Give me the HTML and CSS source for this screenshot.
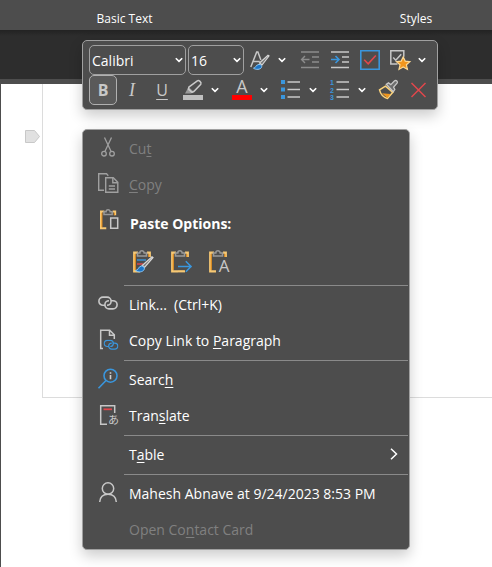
FILE: index.html
```html
<!DOCTYPE html>
<html lang="en">
<head>
<meta charset="utf-8">
<meta name="viewport" content="width=device-width, initial-scale=1">
<title>Notes</title>
<link rel="stylesheet" href="styles.css">
</head>
<body>
<svg class="defs" aria-hidden="true">
  <symbol id="chevron" viewBox="0 0 8 6"><path d="M.8 1.2 4 4.400 7.200 1.200" fill="none" stroke="#fff" stroke-width="1.6"/></symbol>
  <symbol id="clipboard" viewBox="0 0 22 24">
    <path d="M6 3.7H2.2v18.6H8M15 3.7h2.8V8" fill="none" stroke="#f7c873" stroke-width="2.2"/>
    <path d="M3.2 5v16M16.800 5v3" fill="none" stroke="#e8901c" stroke-width="1.2"/>
    <path d="M5.500 7V4h2.300a2.200 2.200 0 0 1 4.400 0h2.300v3z" fill="#4d4d4d" stroke="#999" stroke-width="1.6"/>
  </symbol>
  <symbol id="links" viewBox="0 0 20 14">
    <path d="M6.300 9.300H5a4.100 4.100 0 1 1 0-8.200h4a4.100 4.100 0 0 1 0 8.200M13.700 4.700H15a4.100 4.100 0 1 1 0 8.200h-4a4.100 4.100 0 0 1 0-8.200" fill="none" stroke="currentColor" stroke-width="1.6"/>
  </symbol>
</svg>

<header class="ribbon">
  <div class="group basic">Basic Text</div>
  <div class="divider"></div>
  <div class="group styles">Styles</div>
</header>
<div class="backdrop"></div>
<main class="canvas">
  <svg class="marker" viewBox="0 0 15 13" aria-hidden="true"><path d="M.5.5h9l5 6-5 6h-9z" fill="#e1e1e1" stroke="#c8c8c8"/></svg>
  <div class="page"></div>
</main>

<div class="toolbar" role="toolbar" aria-label="Formatting">
  <div class="row">
    <div class="combo font">
      <select aria-label="Font"><option>Calibri</option></select>
      <svg class="chev"><use href="#chevron"/></svg>
    </div>
    <div class="combo size">
      <select aria-label="Font size"><option>16</option></select>
      <svg class="chev"><use href="#chevron"/></svg>
    </div>
    <div class="split quick">
      <button class="tool" aria-label="Quick styles"><svg class="icon" viewBox="0 0 20 20">
        <path d="M.8 17 6.700 2h1.200l3 8M3 11.500h6.800" fill="none" stroke="#c8c8c8" stroke-width="1.500"/>
        <path d="m19 6-7 9-2.500-2L18 5.300z" fill="#777" stroke="#d8d8d8" stroke-width="1.200"/>
        <path d="M3.500 18.200c2 .2 2.500-3.800 5.500-3.800 2 0 3.300 1.600 2.500 3-1.200 2.300-5.500 2.600-8 .8z" fill="#1c75c8" stroke="#8fc9f5" stroke-width="1"/>
      </svg></button>
      <button class="drop" aria-label="More styles"><svg class="chev"><use href="#chevron"/></svg></button>
    </div>
    <button class="tool" aria-label="Decrease indent" disabled><svg class="icon" viewBox="0 0 20 20">
      <path d="M1 2h18M12 7h7M12 12h7M1 17.500h18" stroke="#8c8c8c" stroke-width="1.600"/>
      <path d="M9.500 9.500H2M5 6 1.600 9.500 5 13" fill="none" stroke="#8c8c8c" stroke-width="1.400"/>
    </svg></button>
    <button class="tool" aria-label="Increase indent"><svg class="icon" viewBox="0 0 20 20">
      <path d="M1 2h18M12 7h7M12 12h7M1 17.500h18" stroke="#c8c8c8" stroke-width="1.600"/>
      <path d="M1 9.500h7.500M5.500 6 9 9.500 5.500 13" fill="none" stroke="#3a96dd" stroke-width="1.600"/>
    </svg></button>
    <button class="tool" aria-label="To Do tag"><svg class="icon" viewBox="0 0 20 20">
      <path d="M.8.8h18.400v18.400H.8z" fill="none" stroke="#3a96dd" stroke-width="1.600"/>
      <path d="m4.200 9.800 4 4 7.600-8.300" fill="none" stroke="#e0474c" stroke-width="1.600"/>
    </svg></button>
    <div class="split">
      <button class="tool" aria-label="Tags"><svg class="icon" viewBox="0 0 20 20">
        <path d="M7.500 14H.8V.8h13v6" fill="none" stroke="#c8c8c8" stroke-width="1.500"/>
        <path d="m3.200 7.500 2.600 2.700 5.400-6" fill="none" stroke="#c8c8c8" stroke-width="1.500"/>
        <path d="m13.200 6.800 2 4.300 4.700.5-3.500 3.200 1 4.600-4.200-2.400-4.200 2.400 1-4.600-3.500-3.200 4.700-.5z" fill="#f0961e" stroke="#fbd894" stroke-width="1.200"/>
      </svg></button>
      <button class="drop" aria-label="More tags"><svg class="chev"><use href="#chevron"/></svg></button>
    </div>
  </div>
  <div class="row">
    <button class="bold" aria-pressed="true">B</button>
    <button class="tool italic">I</button>
    <button class="tool underline">U</button>
    <div class="split spaced">
      <button class="tool" aria-label="Highlight"><svg class="icon" viewBox="0 0 20 20">
        <path d="M0 15h20v5H0z" fill="#bfbfbf"/>
        <path d="M2 13.500 5.500 7l5 4.500-2.500 2z" fill="#999"/>
        <path d="m5.800 7.200 8.500-6.400c1.500-1 4.500 1.500 3.500 3.400l-7 7.300-1.800.8-3.500-3.200z" fill="none" stroke="#c8c8c8" stroke-width="1.500"/>
      </svg></button>
      <button class="drop" aria-label="Highlight colors"><svg class="chev"><use href="#chevron"/></svg></button>
    </div>
    <div class="split spaced">
      <button class="tool" aria-label="Font color"><svg class="icon" viewBox="0 0 20 20">
        <text class="letter" x="10" y="13" font-size="18" text-anchor="middle">A</text>
        <path d="M0 15h20v5H0z" fill="#f00"/>
      </svg></button>
      <button class="drop" aria-label="More font colors"><svg class="chev"><use href="#chevron"/></svg></button>
    </div>
    <div class="split spaced">
      <button class="tool" aria-label="Bullets"><svg class="icon" viewBox="0 0 20 20">
        <path d="M0 0h4v4H0zM0 7.500h4v4H0zM0 15h4v4H0z" fill="#3a96dd"/>
        <path d="M6.500 2H19M6.500 9.500H19M6.500 17H19" stroke="#c8c8c8" stroke-width="1.500"/>
      </svg></button>
      <button class="drop" aria-label="More bullets"><svg class="chev"><use href="#chevron"/></svg></button>
    </div>
    <div class="split spaced">
      <button class="tool" aria-label="Numbering"><svg class="icon" viewBox="0 0 20 20">
        <g class="digits" font-size="7"><text x="0" y="5">1</text><text x="0" y="12.500">2</text><text x="0" y="20">3</text></g>
        <path d="M6.500 2H19M6.500 9.500H19M6.500 17H19" stroke="#c8c8c8" stroke-width="1.500"/>
      </svg></button>
      <button class="drop" aria-label="More numbering"><svg class="chev"><use href="#chevron"/></svg></button>
    </div>
    <button class="tool" aria-label="Format painter"><svg class="icon" viewBox="0 0 20 20">
      <path d="m7.500 6.200-6 3.600c1 4.300 3.800 7.300 8 8.700l5.300-6.200z" fill="#4d4d4d" stroke="#fbd37c" stroke-width="1.500"/>
      <path d="m4 13.300 8.500.8-3.200 4z" fill="#f0961e"/>
      <path d="m8.300 4.300 2.200-1.400 2.300 1.700 3.800-3.800c1.700-1 3.500.8 2.500 2.300l-3.500 4 1.200 2.400-1.500 2.300z" fill="#6d6d6d" stroke="#c8c8c8" stroke-width="1.300"/>
    </svg></button>
    <button class="tool" aria-label="Delete"><svg class="icon" viewBox="0 0 20 20">
      <path d="m3.500 3 14 14M17.500 3l-14 14" stroke="#e0474c" stroke-width="1.500"/>
    </svg></button>
  </div>
</div>

<div class="menu" role="menu">
  <button class="item" role="menuitem" disabled>
    <svg class="glyph" viewBox="0 0 22 22"><g fill="none" stroke="#a0a0a0" stroke-width="1.300"><path d="M7.500.5 14 14.300M14.500.5 8 14.300"/><circle cx="7" cy="16.700" r="2.300"/><circle cx="15" cy="16.700" r="2.300"/></g></svg>
    <span>Cu<u>t</u></span>
  </button>
  <button class="item" role="menuitem" disabled>
    <svg class="glyph" viewBox="0 0 22 22"><g fill="none" stroke="#a0a0a0" stroke-width="1.400"><path d="M7 17.300H1.700V.7h7.800l1.800 2M8.700 4.700h7.600l4.500 4.500v10.100H8.700z"/><path d="M15.800 5v4.700h5M11.800 13H18M11.800 16H18"/></g></svg>
    <span><u>C</u>opy</span>
  </button>
  <div class="heading">
    <svg class="glyph" viewBox="0 0 22 22"><use href="#clipboard" x="2" y="0" width="20" height="22"/><path d="M12.700 10h7.600v10.500h-7.600z" fill="#4d4d4d" stroke="#4d4d4d" stroke-width="4"/><path d="M13.700 10h7v10.300h-7z" fill="#4d4d4d" stroke="#c8c8c8" stroke-width="1.500"/></svg>
    <span>Paste Options:</span>
  </div>
  <div class="paste">
    <button aria-label="Keep source formatting"><svg viewBox="0 0 22 24"><use href="#clipboard"/><path d="M5 11h9" stroke="#3a96dd" stroke-width="1.400"/><path d="M5 15h6" stroke="#e0474c" stroke-width="1.400"/><path d="m21 8.500-8.500 10-2.300-2L20 7.700z" fill="#777" stroke="#d8d8d8" stroke-width="1.200"/><path d="M3.500 21.500c3 0 3-4.500 6-4.500 2.200 0 3.500 1.800 2.700 3.400-1.300 2.800-6 3.400-8.700 1.100z" fill="#1c75c8" stroke="#8fc9f5"/></svg></button>
    <button aria-label="Merge formatting"><svg viewBox="0 0 22 24"><use href="#clipboard"/><path d="M8 22.300h7" stroke="#f7c873" stroke-width="2.200"/><path d="M7.500 17.500h13.500M15.800 12.300l5.200 5.200-5.200 5.200" fill="none" stroke="#4d4d4d" stroke-width="3"/><path d="M8 17.500h13M15.800 12.300l5.200 5.200-5.200 5.200" fill="none" stroke="#3a96dd" stroke-width="1.600"/></svg></button>
    <button aria-label="Keep text only"><svg viewBox="0 0 22 24"><use href="#clipboard"/><text class="letter" x="16" y="23" font-size="17" text-anchor="middle">A</text></svg></button>
  </div>
  <hr>
  <button class="item" role="menuitem">
    <svg class="glyph light" viewBox="0 0 22 22"><use href="#links" x="1" y="3" width="20" height="14"/></svg>
    <span>Link...&nbsp; (Ctrl+K)</span>
  </button>
  <button class="item" role="menuitem">
    <svg class="glyph blue" viewBox="0 0 22 22"><path d="M6 19.500H3.700V1.200h9L17.300 5.800V10M12.500 1.500v4.700h4.800" fill="none" stroke="#c8c8c8" stroke-width="1.500"/><use href="#links" x="6.500" y="10.500" width="15" height="10.500"/></svg>
    <span>Copy Link to <u>P</u>aragraph</span>
  </button>
  <hr>
  <button class="item" role="menuitem">
    <svg class="glyph" viewBox="0 0 22 22"><g fill="none" stroke="#3a96dd" stroke-width="1.600"><circle cx="13.500" cy="7.700" r="6.500"/><path d="m9 12.500-7.500 7.700"/></g><path d="M13.500 4.200v1.600M13.500 7v4.300" stroke="#d0d0d0" stroke-width="1.600"/></svg>
    <span>Searc<u>h</u></span>
  </button>
  <button class="item" role="menuitem">
    <svg class="glyph" viewBox="0 0 22 22"><path d="M10 20.200H3.700V1.700h14V9" fill="none" stroke="#c8c8c8" stroke-width="1.500"/><path d="M6.500 5.300H15" stroke="#e0474c" stroke-width="1.800"/><text class="kana" x="11" y="20" font-size="11">あ</text></svg>
    <span>Tran<u>s</u>late</span>
  </button>
  <hr>
  <button class="item sub" role="menuitem" aria-haspopup="true">
    <span>T<u>a</u>ble</span>
    <svg class="arrow" viewBox="0 0 8 12"><path d="m1 .7 5.500 5.300L1 11.300" fill="none" stroke="#fff" stroke-width="1.500"/></svg>
  </button>
  <hr>
  <button class="item" role="menuitem">
    <svg class="glyph" viewBox="0 0 22 22"><g fill="none" stroke="#c8c8c8" stroke-width="1.500"><circle cx="11" cy="6.500" r="5.700"/><path d="M2.700 20c.3-4.800 3.500-7.800 8.300-7.800s8 3 8.300 7.800"/></g></svg>
    <span>Mahesh Abnave at 9/24/2023 8:53 PM</span>
  </button>
  <button class="item sub" role="menuitem" disabled>
    <span>Open Co<u>n</u>tact Card</span>
  </button>
</div>
</body>
</html>
```
FILE: styles.css
```css
* { box-sizing: border-box; }
html, body { height: 100%; }
body {
  margin: 0;
  display: flex;
  flex-direction: column;
  overflow: hidden;
  background: #fff;
  color: #fff;
  font-family: "Open Sans", "Noto Sans", sans-serif;
  font-size: 14px;
}
button, select {
  margin: 0;
  padding: 0;
  border: 0;
  background: none;
  color: inherit;
  font: inherit;
}
svg { display: block; }
.defs { position: absolute; width: 0; height: 0; }

.ribbon {
  display: flex;
  flex: none;
  height: 30px;
  margin-left: -72px;
  background: #4d4d4d;
  font-size: 12px;
  line-height: 18px;
}
.group { padding-top: 10px; text-align: center; flex: none; }
.basic { width: 393px; }
.styles { width: 190px; }
.divider { width: 1px; height: 23px; background: #868686; }
.backdrop {
  flex: none;
  height: 54px;
  border-bottom: 5px solid #4d4d4d;
  background: linear-gradient(#222, #2d2d2d 6px);
}
.canvas {
  flex: 1;
  display: flex;
  align-items: flex-start;
  border-left: 1px solid #4d4d4d;
}
.marker { flex: none; width: 15px; height: 13px; margin: 46px 2px 0 24px; }
.page {
  flex: 1;
  height: 314px;
  border: solid #dcdcdc;
  border-width: 0 0 1px 1px;
}

.toolbar, .menu {
  position: absolute;
  left: 82px;
  border: 1px solid #a0a0a0;
  border-radius: 5px;
  background: #4d4d4d;
  box-shadow: 0 6px 14px rgba(0, 0, 0, .2);
}
.toolbar { top: 40px; padding: 4px 4px 4px 6px; }
.row { display: flex; height: 30px; }
.combo { position: relative; height: 30px; }
.combo select {
  appearance: none;
  width: 100%;
  height: 100%;
  padding-left: 2px;
  border: 1px solid #a0a0a0;
  border-radius: 5px;
}
.combo .chev { position: absolute; right: 3px; top: 12px; }
.font { width: 97px; margin-right: 2px; }
.size { width: 56px; }
.chev { width: 8px; height: 6px; }
.tool, .drop { display: grid; place-items: center; height: 30px; }
.tool { width: 30px; color: #c8c8c8; }
.drop { width: 14px; }
.icon { width: 20px; height: 20px; overflow: visible; }
.split { display: flex; }
.quick { margin: 0 6px 0 1px; }
.spaced { margin: 0 4px 0 1px; }
.bold {
  width: 28px;
  border: 1px solid #b0b0b0;
  border-radius: 5px;
  background: #5a5a5a;
  color: #c8c8c8;
  font-size: 16px;
  font-weight: 700;
  line-height: 24px;
}
.italic { font: italic 18px/26px "Liberation Serif", serif; }
.underline { font-size: 16px; line-height: 26px; text-decoration: underline; text-underline-offset: 3px; }
.letter { fill: #c8c8c8; font-family: "Open Sans", sans-serif; }
.digits { fill: #3a96dd; font-family: "Liberation Sans", sans-serif; font-weight: 700; }
.kana { fill: #c8c8c8; font-family: "Noto Sans CJK JP", sans-serif; }

.menu { top: 129px; width: 328px; padding-bottom: 2px; }
.item {
  display: flex;
  align-items: center;
  gap: 10px;
  width: 100%;
  height: 36px;
  padding: 0 11px 0 14px;
  text-align: left;
  white-space: nowrap;
}
.item:disabled { color: #808080; }
.item u { text-underline-offset: 2px; }
.sub { padding-left: 46px; justify-content: space-between; }
.glyph { flex: none; width: 22px; height: 22px; overflow: visible; }
.light { color: #c8c8c8; }
.blue { color: #3a96dd; }
.arrow { width: 8px; height: 12px; }
.heading {
  display: flex;
  gap: 11px;
  height: 39px;
  padding: 6px 14px 0;
  font-weight: 700;
  line-height: 32px;
}
.paste { display: flex; gap: 8px; height: 42px; padding-left: 45px; }
.paste button { display: grid; place-items: center; width: 30px; height: 40px; }
.paste svg { width: 22px; height: 24px; overflow: visible; }
hr {
  height: 1px;
  margin: 2px 1px 0 41px;
  border: 0;
  background: #8a8a8a;
}
```
